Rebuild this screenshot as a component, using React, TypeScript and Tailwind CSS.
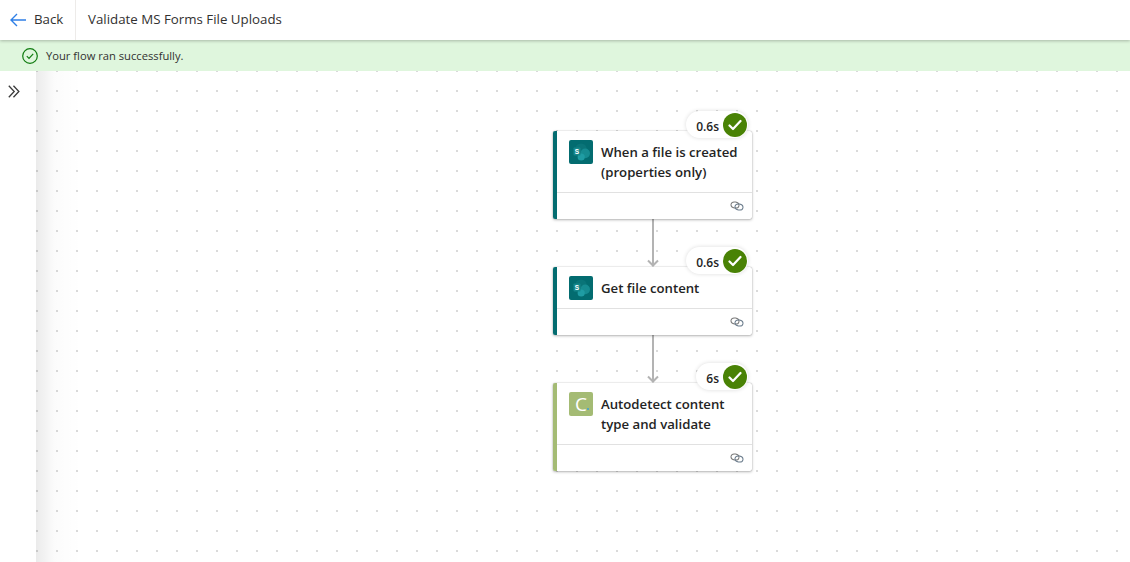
import React from "react";

const font = { fontFamily: '"Open Sans", "Noto Sans", sans-serif' };

function SharePointIcon() {
  return (
    <svg width="24" height="24" viewBox="0 0 24 24" className="mt-px shrink-0">
      <rect width="24" height="24" rx="2" fill="#036c70" />
      <circle cx="12" cy="9.2" r="5.8" fill="#0a7478" />
      <circle cx="16.2" cy="13.4" r="4.8" fill="#168c91" />
      <circle cx="12.2" cy="17" r="3.6" fill="#1f9ca3" />
      <rect x="4.5" y="7.5" width="7" height="8" rx="0.8" fill="#15868a" />
      <text x="8" y="13.8" fontSize="6.5" fontWeight="700" textAnchor="middle" fill="#ffffff" fontFamily="Liberation Sans, sans-serif">S</text>
    </svg>
  );
}

function ContentIcon() {
  return (
    <div className="relative mt-px flex h-6 w-6 shrink-0 items-center justify-center rounded-[2px] bg-[#a4bb74]">
      <span className="text-[19px] font-normal leading-none text-white" style={font}>C</span>
      <span className="absolute bottom-[6px] right-[4px] h-[2px] w-[2px] rounded-full bg-[#3aa0d8]" />
    </div>
  );
}

function LinkIcon() {
  return (
    <svg width="14" height="12" viewBox="0 0 14 12" fill="none" strokeWidth="1">
      <ellipse cx="5" cy="5" rx="4" ry="3" transform="rotate(12 5 5)" stroke="#7a7a7a" />
      <ellipse cx="9" cy="7" rx="4" ry="3" transform="rotate(12 9 7)" stroke="#6b7c8c" />
    </svg>
  );
}

function Check() {
  return (
    <div className="flex h-6 w-6 items-center justify-center rounded-full bg-[#498205]">
      <svg width="14" height="12" viewBox="0 0 14 12" fill="none">
        <path d="M1.5 6.5 L5 10 L12.5 2" stroke="#ffffff" strokeWidth="2.2" strokeLinecap="round" strokeLinejoin="round" />
      </svg>
    </div>
  );
}

function Node({ title, time, accent, icon, bodyH }: { title: string[]; time: string; accent: string; icon: React.ReactNode; bodyH: string }) {
  return (
    <div className="relative flex w-[199px] rounded-[2px] bg-white shadow-[0_0_1px_rgba(0,0,0,0.4),0_1px_3px_rgba(0,0,0,0.28)]">
      <div className={`w-1 shrink-0 rounded-l-[2px] ${accent}`} />
      <div className="min-w-0 flex-1">
        <div className={`flex gap-2 pl-3 pt-2 ${bodyH}`}>
          {icon}
          <div className="mt-[3px] text-[13.2px] font-semibold leading-5 text-[#242424]" style={font}>
            {title.map((t) => (
              <div key={t} className="whitespace-nowrap">{t}</div>
            ))}
          </div>
        </div>
        <div className="flex h-[27px] items-center justify-end border-t border-[#e1e1e1] pr-[8px]">
          <LinkIcon />
        </div>
      </div>
      <div className="absolute right-[4px] top-[-20px] flex h-[27px] items-center gap-1 rounded-full bg-white pl-[10px] pr-px shadow-[0_0_4px_rgba(0,0,0,0.14)]">
        <span className="mt-1 text-xs font-semibold text-[#242424]" style={font}>{time}</span>
        <Check />
      </div>
    </div>
  );
}

function Connector() {
  return (
    <svg width="14" height="48" viewBox="0 0 14 48" fill="none" className="ml-[93px] block">
      <path d="M7 0 V47" stroke="#b3b3b3" strokeWidth="2" />
      <path d="M2 41.5 L7 46.5 L12 41.5" stroke="#b3b3b3" strokeWidth="2" />
    </svg>
  );
}

export default function App() {
  return (
    <div className="flex h-[562px] w-[1130px] flex-col overflow-hidden bg-white" style={font}>
      <header className="relative z-10 flex h-10 shrink-0 items-center bg-white text-[13.3px] text-[#323130] shadow-[0_1px_3px_rgba(0,0,0,0.25)]">
        <div className="flex h-full w-[76px] items-center gap-2 border-r border-[#edebe9] pl-[10px]">
          <svg width="16" height="14" viewBox="0 0 16 14" fill="none">
            <path d="M16 7 H1 M7 1 L1 7 L7 13" stroke="#2f7fe6" strokeWidth="1.4" />
          </svg>
          <span>Back</span>
        </div>
        <span className="pl-3">Validate MS Forms File Uploads</span>
      </header>
      <div className="flex h-[31px] shrink-0 items-center gap-2 bg-[#dff6dd] pl-[22px] text-[11.2px] text-[#323130]">
        <svg width="16" height="16" viewBox="0 0 16 16" fill="none">
          <circle cx="8" cy="8" r="7.3" stroke="#107c10" strokeWidth="1.2" />
          <path d="M4.8 8.2 L7 10.4 L11.2 5.8" stroke="#107c10" strokeWidth="1.2" />
        </svg>
        <span className="mt-px">Your flow ran successfully.</span>
      </div>
      <div className="flex min-h-0 flex-1">
        <aside className="flex w-9 shrink-0 justify-start bg-white pl-[8px] pt-[14px]">
          <svg width="12" height="13" viewBox="0 0 11 12" fill="none">
            <path d="M0.7 0.7 L5.7 6 L0.7 11.3 M5 0.7 L10 6 L5 11.3" stroke="#3a3a3a" strokeWidth="1.2" />
          </svg>
        </aside>
        <main className="relative flex-1 bg-[radial-gradient(circle_at_1px_1px,#dadada_1.2px,transparent_1.3px)] bg-[size:20px_20px] bg-[position:0px_-1px]">
          <div className="pointer-events-none absolute inset-y-0 left-0 w-[46px] bg-gradient-to-r from-black/[0.08] via-black/[0.015] via-40% to-transparent" />
          <div className="relative flex flex-col items-start pl-[517px] pt-[60px]">
            <Node title={["When a file is created", "(properties only)"]} time="0.6s" accent="bg-[#036c70]" icon={<SharePointIcon />} bodyH="h-[61px]" />
            <Connector />
            <Node title={["Get file content"]} time="0.6s" accent="bg-[#036c70]" icon={<SharePointIcon />} bodyH="h-[41px]" />
            <Connector />
            <Node title={["Autodetect content", "type and validate"]} time="6s" accent="bg-[#a4bb74]" icon={<ContentIcon />} bodyH="h-[61px]" />
          </div>
        </main>
      </div>
    </div>
  );
}
